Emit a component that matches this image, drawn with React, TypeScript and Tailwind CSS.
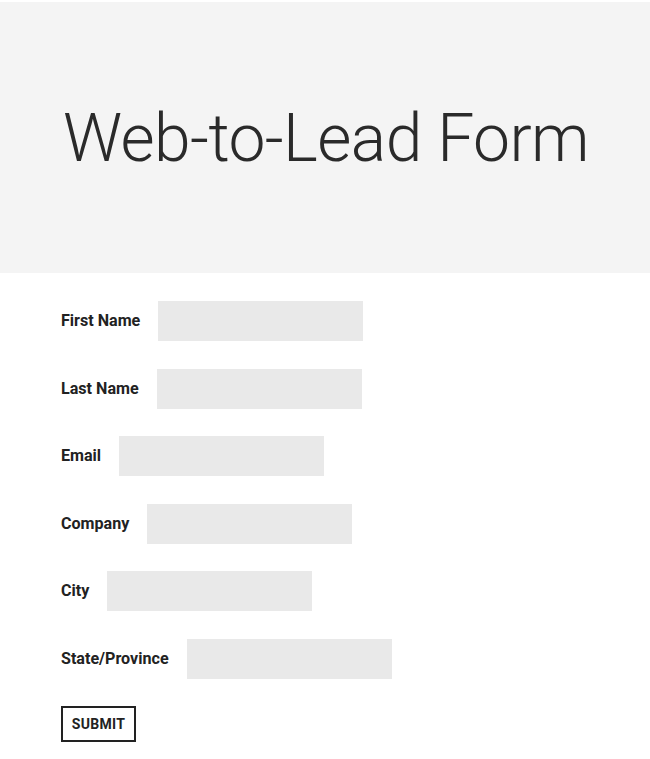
export default function App() {
  const fields = ["First Name", "Last Name", "Email", "Company", "City", "State/Province"];

  return (
    <div className="min-h-screen bg-white pt-[2px] font-['Roboto',sans-serif] text-[#222]">
      {/* HEADER */}
      <header className="h-[271px] bg-[#f4f4f4] flex items-center justify-center">
        <h1 className="text-[66px] font-light leading-none text-[#2a2a2a] tracking-[-0.6px] pt-[3px] pl-[2px]">Web-to-Lead Form</h1>
      </header>

      {/* FORM */}
      <form className="pl-[61px] pt-[28px] flex flex-col gap-[27.5px]">
        {fields.map((f) => (
          <div key={f} className="flex items-center gap-[18px]">
            <label className="text-[16.1px] font-bold text-[#222] pt-[1px]">{f}</label>
            <input type="text" className="w-[205px] h-[40px] bg-[#e9e9e9] outline-none" />
          </div>
        ))}
        <div>
          <button
            type="button"
            className="w-[75px] h-[36px] border-2 border-[#222] text-[14px] font-bold text-[#222] uppercase tracking-[0.3px]"
          >
            Submit
          </button>
        </div>
      </form>
    </div>
  );
}
